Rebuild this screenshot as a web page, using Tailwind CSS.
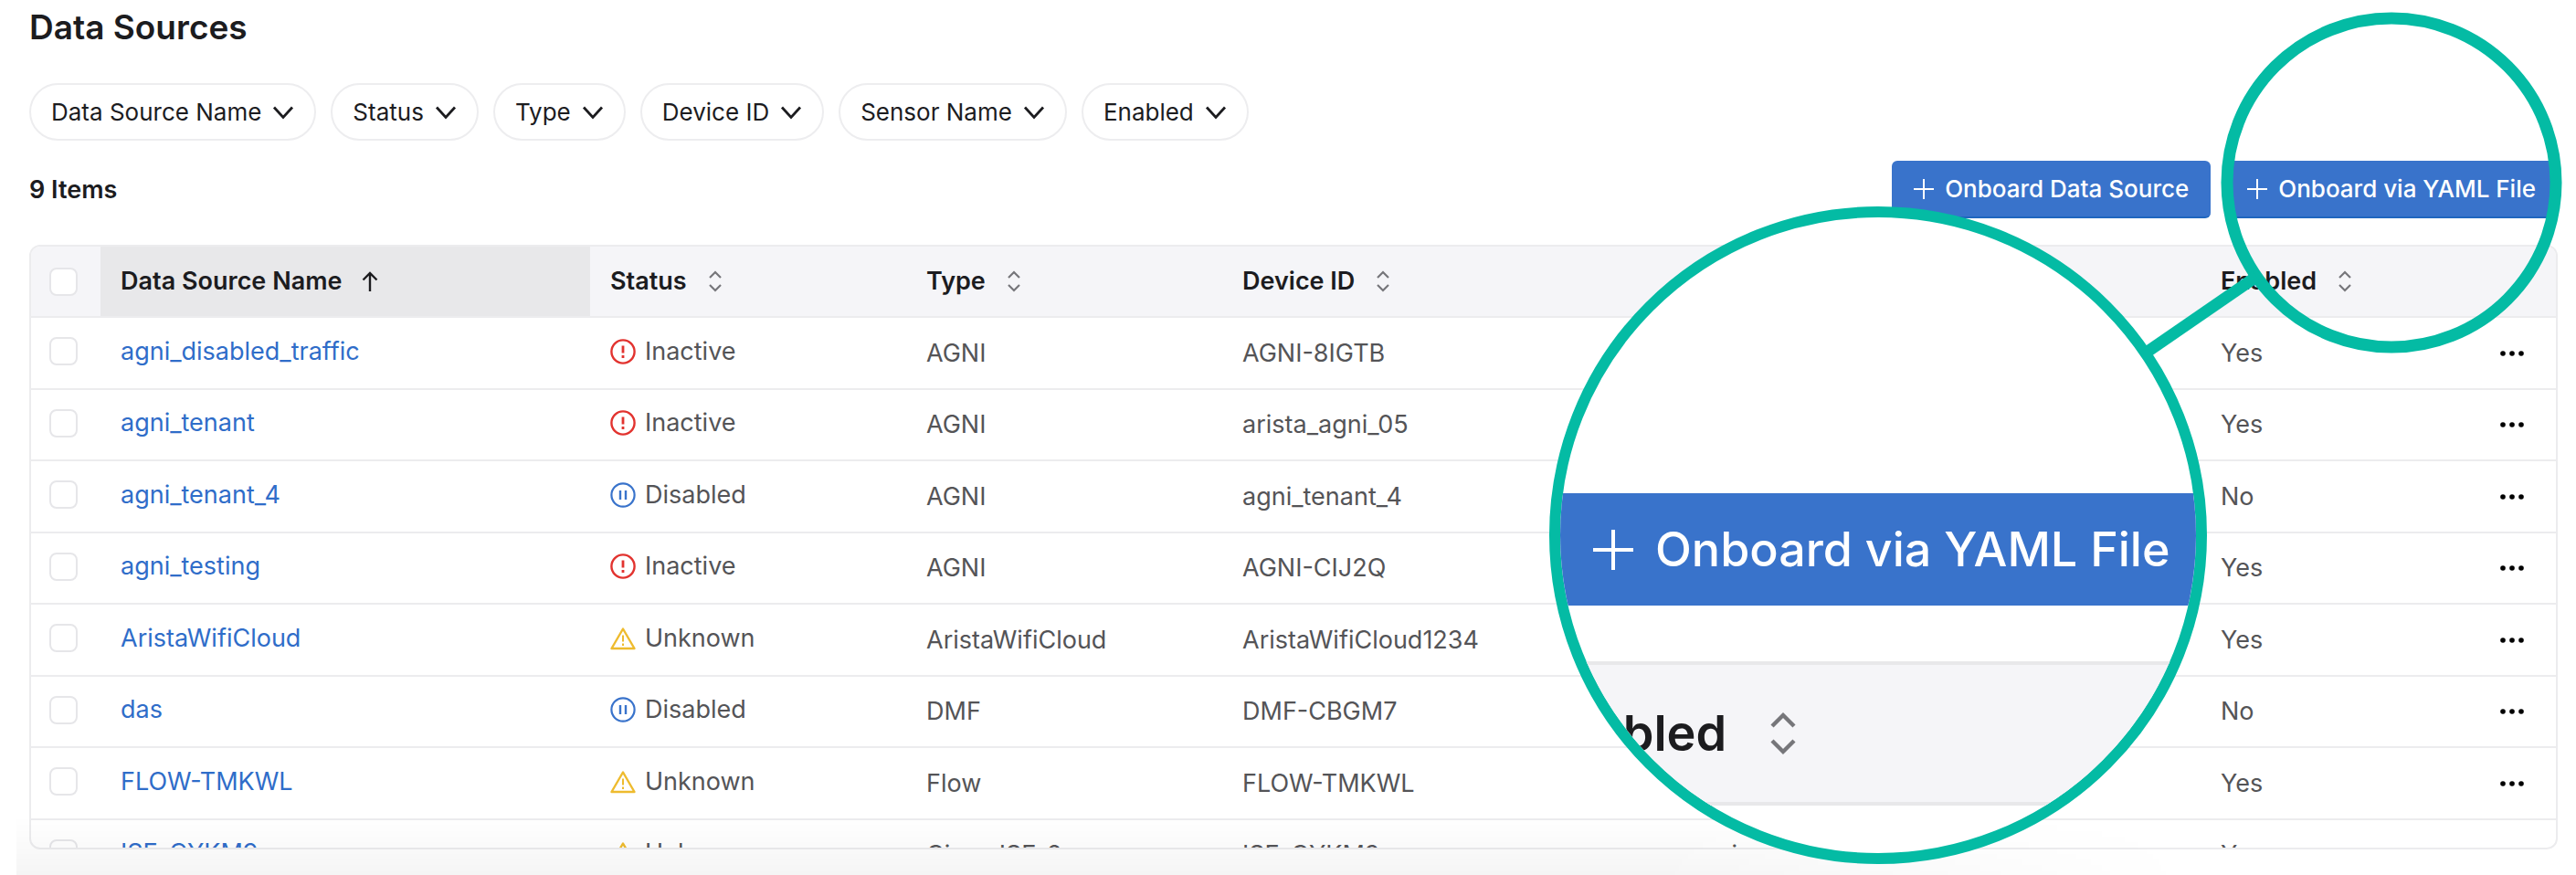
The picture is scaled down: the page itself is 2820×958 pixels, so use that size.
<!DOCTYPE html>
<html lang="en">
<head>
    <meta charset="UTF-8">
    <meta name="viewport" content="width=device-width, initial-scale=1.0">
    <title>Data Sources</title>
    <script src="https://cdn.jsdelivr.net/npm/@tailwindcss/browser@4"></script>
</head>
<body class="bg-white font-['Inter',sans-serif] text-[27px] leading-8 text-[#1c1c1f]">
    <!-- Shared icons -->
    <svg class="hidden">
        <symbol id="chevron" viewBox="0 0 24 16"><path d="M2 2.5 12 13.5 22 2.5" fill="none" stroke="currentColor" stroke-width="2.8"/></symbol>
        <symbol id="plus" viewBox="0 0 22 22"><path d="M11 0v22M0 11h22" fill="none" stroke="currentColor" stroke-width="2"/></symbol>
        <symbol id="sort" viewBox="0 0 14 24"><path d="M1 8 7 2l6 6M1 16l6 6 6-6" fill="none" stroke="currentColor" stroke-width="2.2"/></symbol>
        <symbol id="arrow-up" viewBox="0 0 18 24"><path d="M9 23V3M1.500 10.500 9 3l7.500 7.500" fill="none" stroke="currentColor" stroke-width="2.4"/></symbol>
        <symbol id="dots" viewBox="0 0 26 6"><g fill="currentColor"><circle cx="3" cy="3" r="2.800"/><circle cx="13" cy="3" r="2.800"/><circle cx="23" cy="3" r="2.800"/></g></symbol>
        <symbol id="inactive" viewBox="0 0 28 28"><circle cx="14" cy="14" r="12.600" fill="none" stroke="currentColor" stroke-width="2.400"/><path d="M14 7.500v8M14 18v3" fill="none" stroke="currentColor" stroke-width="2.800"/></symbol>
        <symbol id="disabled" viewBox="0 0 28 28"><circle cx="14" cy="14" r="12.600" fill="none" stroke="currentColor" stroke-width="2.200"/><path d="M11 9v10M17 9v10" fill="none" stroke="currentColor" stroke-width="2.400"/></symbol>
        <symbol id="unknown" viewBox="0 0 28 28"><path d="M14 3.500 26.500 25H1.500Z" fill="none" stroke="currentColor" stroke-width="2.400" stroke-linejoin="round"/><path d="M14 10.500v7M14 19.500v2.500" fill="none" stroke="currentColor" stroke-width="2"/></symbol>
    </svg>

    <div class="relative flex h-screen flex-col overflow-hidden pt-2 pr-5 pb-7 pl-8">
        <h1 class="text-[37px] leading-[44px] font-semibold">Data Sources</h1>

        <!-- Filters -->
        <div id="filters" class="mt-[39px] flex gap-4 text-[26px]"></div>

        <!-- Count and actions -->
        <div class="mt-[22px] flex items-center justify-between">
            <p class="font-semibold">9 Items</p>
            <div class="flex gap-4 text-[26px] text-white">
                <button class="flex h-[63px] items-center gap-3 rounded-md border-b-2 border-[#1f66bf] bg-[#3973cb] px-6 font-medium">
                    <svg class="size-[22px]"><use href="#plus"/></svg>Onboard Data Source
                </button>
                <button class="flex h-[63px] items-center gap-3 rounded-md border-b-2 border-[#1f66bf] bg-[#3973cb] px-6 font-medium">
                    <svg class="size-[22px]"><use href="#plus"/></svg>Onboard via YAML File
                </button>
            </div>
        </div>

        <!-- Data source table -->
        <div class="mt-[29px] min-h-0 flex-1 overflow-hidden rounded-xl border-2 border-[#ececee]">
            <table class="w-full table-fixed text-left">
                <colgroup>
                    <col class="w-[76px]">
                    <col class="w-[536px]">
                    <col class="w-[346px]">
                    <col class="w-[346px]">
                    <col>
                    <col>
                    <col class="w-[292px]">
                    <col class="w-[97px]">
                </colgroup>
                <thead class="bg-[#f5f5f8]">
                    <tr class="h-[77px] border-b-2 border-[#ececee]">
                        <th class="pl-5"><input type="checkbox" aria-label="Select all" class="block size-[31px] appearance-none rounded-lg border-2 border-[#e6e6e9] bg-white"></th>
                        <th class="bg-[#e8e8ea] px-[22px] font-semibold"><span class="flex items-center gap-[22px]">Data Source Name<svg class="h-6 w-[18px]"><use href="#arrow-up"/></svg></span></th>
                        <th class="px-[22px] font-semibold"><span class="flex items-center gap-6">Status<svg class="h-6 w-[14px] text-[#76767a]"><use href="#sort"/></svg></span></th>
                        <th class="px-[22px] font-semibold"><span class="flex items-center gap-6">Type<svg class="h-6 w-[14px] text-[#76767a]"><use href="#sort"/></svg></span></th>
                        <th class="px-[22px] font-semibold"><span class="flex items-center gap-6">Device ID<svg class="h-6 w-[14px] text-[#76767a]"><use href="#sort"/></svg></span></th>
                        <th class="px-[22px] font-semibold"><span class="flex items-center gap-6">Sensor Name<svg class="h-6 w-[14px] text-[#76767a]"><use href="#sort"/></svg></span></th>
                        <th class="px-[22px] font-semibold"><span class="flex items-center gap-6">Enabled<svg class="h-6 w-[14px] text-[#76767a]"><use href="#sort"/></svg></span></th>
                        <th></th>
                    </tr>
                </thead>
                <tbody id="rows" class="text-[#545457]"></tbody>
            </table>
        </div>

        <!-- Shade along the bottom edge -->
        <div class="pointer-events-none absolute right-[420px] bottom-0 left-[18px] h-16 bg-linear-to-t from-black/4 to-transparent [mask-image:linear-gradient(to_right,black_75%,transparent)]"></div>

        <!-- Callout ring and connector -->
        <svg class="pointer-events-none absolute top-0 right-0 h-[400px] w-[500px]" viewBox="0 0 500 400" fill="none" stroke="#04bba4" stroke-width="13">
            <circle cx="298" cy="200" r="180"/>
            <path d="M28 387 150 303"/>
        </svg>

        <!-- Magnified button -->
        <div class="absolute top-[226px] right-[404px] flex size-[720px] flex-col overflow-hidden rounded-full border-[12px] border-[#04bba4] bg-white pt-[302px]">
            <button class="flex h-[123px] shrink-0 items-center gap-6 bg-[#3973cb] pl-9 text-[52px] font-medium whitespace-nowrap text-white">
                <svg class="size-11 shrink-0"><use href="#plus"/></svg>Onboard via YAML File
            </button>
            <div class="mt-[61px] flex h-[158px] shrink-0 items-center gap-12 border-y-4 border-[#e8e8ea] bg-[#f5f5f8] text-[54px] font-semibold">
                <span class="-ml-7">Enabled</span><svg class="h-12 w-7 text-[#76767a]"><use href="#sort"/></svg>
            </div>
        </div>
    </div>

    <script>
        const filters = ['Data Source Name', 'Status', 'Type', 'Device ID', 'Sensor Name', 'Enabled'];

        const sources = [
            ['agni_disabled_traffic', 'Inactive', 'AGNI', 'AGNI-8IGTB', '', 'Yes'],
            ['agni_tenant', 'Inactive', 'AGNI', 'arista_agni_05', '', 'Yes'],
            ['agni_tenant_4', 'Disabled', 'AGNI', 'agni_tenant_4', '', 'No'],
            ['agni_testing', 'Inactive', 'AGNI', 'AGNI-CIJ2Q', '', 'Yes'],
            ['AristaWifiCloud', 'Unknown', 'AristaWifiCloud', 'AristaWifiCloud1234', '', 'Yes'],
            ['das', 'Disabled', 'DMF', 'DMF-CBGM7', '', 'No'],
            ['FLOW-TMKWL', 'Unknown', 'Flow', 'FLOW-TMKWL', '', 'Yes'],
            ['ISE-CYKM9', 'Unknown', 'Cisco ISE-2', 'ISE-CYKM9', 'i', 'Yes']
        ];

        const statusIcons = {
            Inactive: '<svg class="size-7 text-[#e2332f]"><use href="#inactive"/></svg>',
            Disabled: '<svg class="size-7 text-[#3973cb]"><use href="#disabled"/></svg>',
            Unknown: '<svg class="size-7 text-[#eebb2e]"><use href="#unknown"/></svg>'
        };

        document.getElementById('filters').innerHTML = filters.map(name => `
            <button class="flex h-[63px] items-center gap-3 rounded-full border-2 border-[#ededef] px-[22px]">
                ${name}<svg class="h-4 w-6"><use href="#chevron"/></svg>
            </button>`).join('');

        document.getElementById('rows').innerHTML = sources.map(([name, status, type, device, sensor, enabled]) => `
            <tr class="border-b-2 border-[#ececee] odd:h-[79px] even:h-[78px]">
                <td class="pb-1 pl-5"><input type="checkbox" aria-label="Select ${name}" class="block size-[31px] appearance-none rounded-lg border-2 border-[#e6e6e9] bg-white"></td>
                <td class="px-[22px] pb-1"><a href="#" class="text-[#2f6dc9]">${name}</a></td>
                <td class="px-[22px] pb-1"><span class="flex items-center gap-2.5">${statusIcons[status]}${status}</span></td>
                <td class="px-[22px]">${type}</td>
                <td class="px-[22px]">${device}</td>
                <td class="px-[22px]">${sensor}</td>
                <td class="px-[22px]">${enabled}</td>
                <td class="pl-9"><button aria-label="Actions for ${name}" class="block text-black"><svg class="h-1.5 w-[26px]"><use href="#dots"/></svg></button></td>
            </tr>`).join('');
    </script>
</body>
</html>
